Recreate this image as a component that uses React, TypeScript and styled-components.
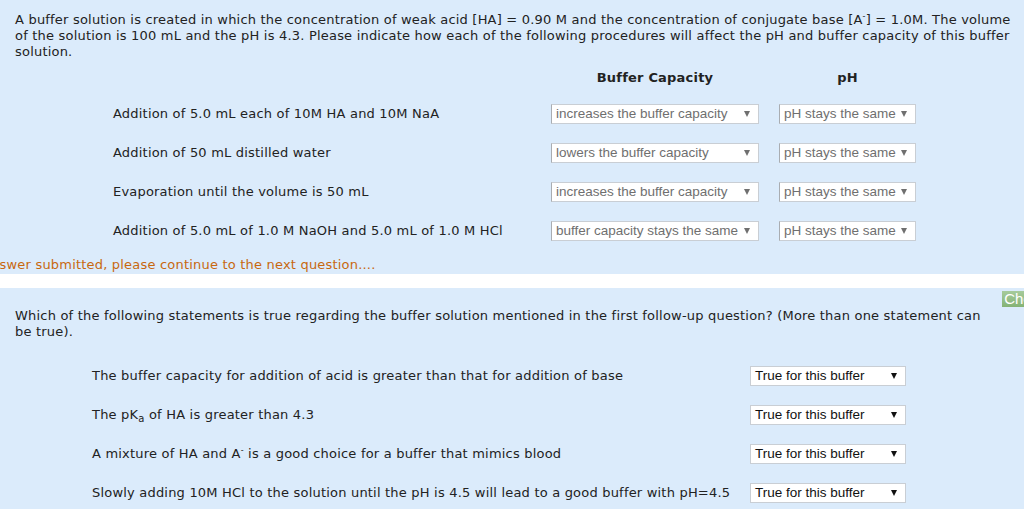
import React from "react"
import styled, { createGlobalStyle } from "styled-components"

const GlobalStyle = createGlobalStyle`
  body {
    margin: 0;
    background: #ffffff;
    overflow: hidden;
    font-family: "DejaVu Sans", Verdana, sans-serif;
    font-size: 13px;
    letter-spacing: 0.2px;
    color: #222222;
  }
`

const Panel = styled.section<{ pad?: string }>`
  background: #dbebfb;
  padding: ${({ pad }) => (pad ? pad : "0")};
  margin-bottom: 14px;
`

const Intro = styled.p`
  margin: 0;
  padding: 0 10px 0 15px;
  line-height: 16px;
  white-space: nowrap;

  sup {
    font-size: 8px;
    vertical-align: 5px;
    line-height: 0;
  }
`

const Grid = styled.div<{ cols: string; indent: number; top?: number; head?: boolean }>`
  display: grid;
  grid-template-columns: ${({ cols }) => cols};
  grid-template-rows: ${({ head }) => (head ? "34px" : "none")};
  grid-auto-rows: 39px;
  column-gap: 20px;
  align-items: center;
  padding-left: ${({ indent }) => indent}px;
  margin-top: ${({ top }) => (top ? top : 0)}px;
`

const HeaderCell = styled.div`
  font-weight: bold;
  text-align: center;
  box-sizing: border-box;
  height: 34px;
  padding-top: 2px;
  line-height: 32px;
`

const Label = styled.div`
  line-height: 16px;
  white-space: nowrap;

  sub {
    font-size: 10px;
    vertical-align: -3px;
    line-height: 0;
  }

  sup {
    font-size: 8px;
    vertical-align: 5px;
    line-height: 0;
  }
`

const Select = styled.div<{ dim?: boolean }>`
  display: flex;
  align-items: center;
  justify-content: space-between;
  box-sizing: border-box;
  height: 20px;
  padding: 0 8px 0 4px;
  background: #ffffff;
  border: 1px solid #c9ced4;
  border-left-color: ${({ dim }) => (dim ? "#a9adb2" : "#c9ced4")};
  font-family: "Liberation Sans", Arial, sans-serif;
  font-size: 13.5px;
  letter-spacing: 0;
  color: ${({ dim }) => (dim ? "#6f6f6f" : "#111111")};
  white-space: nowrap;
`

const Arrow = styled.span<{ dim?: boolean }>`
  width: 0;
  height: 0;
  border-left: 3.5px solid transparent;
  border-right: 3.5px solid transparent;
  border-top: 6px solid ${({ dim }) => (dim ? "#6f6f6f" : "#111111")};
  margin-left: 4px;
  flex: none;
`

const Feedback = styled.div`
  margin: 7px 0 0 -18px;
  line-height: 16px;
  color: #c8680f;
  white-space: nowrap;
`

const ButtonRow = styled.div`
  display: flex;
  justify-content: flex-end;
  align-items: flex-start;
  padding-top: 3px;
  height: 17px;
  margin-right: -78px;
`

const CheckButton = styled.button`
  height: 16px;
  padding: 0 2px;
  border: none;
  background: linear-gradient(#a6cb9b, #84b375);
  color: #ffffff;
  font-family: "Liberation Sans", Arial, sans-serif;
  font-size: 15px;
  line-height: 16px;
`

const Spacer = styled.div``

const capacityRows = [
  { label: "Addition of 5.0 mL each of 10M HA and 10M NaA", cap: "increases the buffer capacity" },
  { label: "Addition of 50 mL distilled water", cap: "lowers the buffer capacity" },
  { label: "Evaporation until the volume is 50 mL", cap: "increases the buffer capacity" },
  { label: "Addition of 5.0 mL of 1.0 M NaOH and 5.0 mL of 1.0 M HCl", cap: "buffer capacity stays the same" },
]

const statements: React.ReactNode[] = [
  "The buffer capacity for addition of acid is greater than that for addition of base",
  <>
    The pK<sub>a</sub> of HA is greater than 4.3
  </>,
  <>
    A mixture of HA and A<sup>-</sup> is a good choice for a buffer that mimics blood
  </>,
  "Slowly adding 10M HCl to the solution until the pH is 4.5 will lead to a good buffer with pH=4.5",
]

export default function App() {
  return (
    <>
      <GlobalStyle />
      <Panel pad="12px 0 1px">
        <Intro>
          A buffer solution is created in which the concentration of weak acid [HA] = 0.90 M and the
          concentration of conjugate base [A<sup>-</sup>] = 1.0M. The volume
          <br />
          of the solution is 100 mL and the pH is 4.3. Please indicate how each of the following
          procedures will affect the pH and buffer capacity of this buffer
          <br />
          solution.
        </Intro>
        <Grid cols="418px 208px 137px" indent={113} head>
          <Spacer />
          <HeaderCell>Buffer Capacity</HeaderCell>
          <HeaderCell>pH</HeaderCell>
          {capacityRows.map(r => (
            <React.Fragment key={r.label}>
              <Label>{r.label}</Label>
              <Select dim>
                {r.cap}
                <Arrow dim />
              </Select>
              <Select dim>
                pH stays the same
                <Arrow dim />
              </Select>
            </React.Fragment>
          ))}
        </Grid>
        <Feedback>Answer submitted, please continue to the next question....</Feedback>
      </Panel>
      <Panel>
        <ButtonRow>
          <CheckButton>Check Answer</CheckButton>
        </ButtonRow>
        <Intro>
          Which of the following statements is true regarding the buffer solution mentioned in the
          first follow-up question? (More than one statement can
          <br />
          be true).
        </Intro>
        <Grid cols="638px 156px" indent={92} top={16}>
          {statements.map((s, i) => (
            <React.Fragment key={i}>
              <Label>{s}</Label>
              <Select>
                True for this buffer
                <Arrow />
              </Select>
            </React.Fragment>
          ))}
        </Grid>
      </Panel>
    </>
  )
}
